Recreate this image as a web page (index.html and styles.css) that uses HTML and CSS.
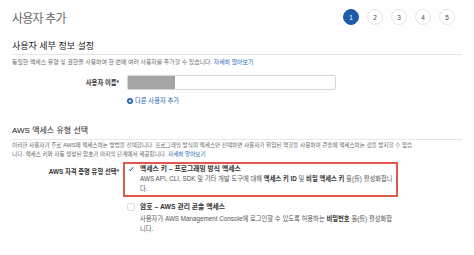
FILE: index.html
```html
<!DOCTYPE html>
<html lang="ko">
<head>
  <meta charset="UTF-8" />
  <meta name="viewport" content="width=device-width, initial-scale=1.0"/>
  <title>사용자 추가</title>
  <link rel="stylesheet" href="styles.css">
</head>
<body>
  <div class="page">
    <div class="top">
      <h1 class="title">사용자 추가</h1>
      <ol class="steps">
        <li class="active">1</li>
        <li>2</li>
        <li>3</li>
        <li>4</li>
        <li>5</li>
      </ol>
    </div>

    <section class="section first">
      <h2>사용자 세부 정보 설정</h2>
      <p class="desc">동일한 액세스 유형 및 권한을 사용하여 한 번에 여러 사용자를 추가할 수 있습니다. <a href="#">자세히 알아보기</a></p>

      <div class="field">
        <label class="label">사용자 이름*</label>
        <div class="input"><span class="masked"></span></div>
      </div>
      <div class="field add-row">
        <span></span>
        <a href="#" class="add-user">
          <svg width="6" height="6" viewBox="0 0 12 12">
            <circle cx="6" cy="6" r="6" fill="#1d5fae"/>
            <path d="M6 3v6M3 6h6" stroke="#fff" stroke-width="2"/>
          </svg>
          다른 사용자 추가
        </a>
      </div>
    </section>

    <section class="section second">
      <h2>AWS 액세스 유형 선택</h2>
      <p class="desc">
        <span class="line">이러한 사용자가 주로 AWS에 액세스하는 방법을 선택합니다. 프로그래밍 방식의 액세스만 선택하면 사용자가 위임된 역할을 사용하여 콘솔에 액세스하는 것을 방지할 수 없습</span>
        <span class="line">니다. 액세스 키와 자동 생성된 암호가 마지막 단계에서 제공됩니다. <a href="#">자세히 알아보기</a></span>
      </p>

      <div class="field cred">
        <label class="label">AWS 자격 증명 유형 선택*</label>
        <div class="options">
          <div class="option selected">
            <span class="check on">
              <svg width="6" height="6" viewBox="0 0 12 12">
                <path d="M2 6.5l2.8 2.8L10 2.5" fill="none" stroke="#1b3f7a" stroke-width="2"/>
              </svg>
            </span>
            <div class="option-text">
              <div class="option-title">액세스 키 – 프로그래밍 방식 액세스</div>
              <div class="option-desc">
                <span class="line">AWS API, CLI, SDK 및 기타 개발 도구에 대해 <b>액세스 키 ID</b> 및 <b>비밀 액세스 키</b> 을(를) 활성화합니</span>
                <span class="line">다.</span>
              </div>
            </div>
          </div>
          <div class="option">
            <span class="check"></span>
            <div class="option-text">
              <div class="option-title">암호 – AWS 관리 콘솔 액세스</div>
              <div class="option-desc">
                <span class="line">사용자가 AWS Management Console에 로그인할 수 있도록 허용하는 <b>비밀번호</b> 을(를) 활성화합</span>
                <span class="line">니다.</span>
              </div>
            </div>
          </div>
        </div>
      </div>
    </section>
  </div>
</body>
</html>
```

FILE: styles.css
```css
body {
  font-family: "Liberation Sans", "Noto Sans CJK KR", sans-serif;
  background-color: #fff;
  color: #333;
  margin: 0;
  padding: 0;
}

.page {
  padding: 0 12px;
}

.top {
  height: 34px;
  display: flex;
  align-items: center;
  justify-content: space-between;
}

.title {
  margin: 0;
  font-size: 12px;
  letter-spacing: -0.8px;
  font-weight: 400;
  color: #666;
}

.steps {
  list-style: none;
  margin: 0 7px 0 0;
  padding: 0;
  display: flex;
  gap: 8px;
}

.steps li {
  width: 16px;
  height: 16px;
  border-radius: 50%;
  border: 1px solid #e6e6e6;
  box-sizing: border-box;
  display: flex;
  align-items: center;
  justify-content: center;
  font-size: 6.5px;
  color: #444;
  background-color: #fff;
}

.steps li.active {
  background-color: #1f5bab;
  border-color: #1f5bab;
  color: #fff;
}

.section h2 {
  margin: 0;
  font-size: 9px;
  line-height: 14px;
  font-weight: 400;
  color: #222;
  padding-bottom: 1px;
  border-bottom: 1px solid #e6e6e6;
}

.first h2 {
  margin-top: 5px;
}

.second h2 {
  margin-top: 18px;
  font-size: 8px;
}

.desc {
  margin: 3px 0 0;
  font-size: 5.9px;
  line-height: 9.5px;
  color: #666;
}

.second .desc {
  margin-top: 1px;
  font-size: 5.6px;
}

.line {
  display: block;
  white-space: nowrap;
}

a {
  color: #1e68b5;
  text-decoration: none;
}

.field {
  display: grid;
  grid-template-columns: 107px 1fr;
  column-gap: 8px;
  align-items: center;
  margin-top: 7px;
}

.label {
  text-align: right;
  font-size: 6.3px;
  font-weight: 700;
  color: #333;
}

.input {
  width: 209px;
  height: 15px;
  border: 1px solid #d5d5d5;
  border-radius: 2px;
  box-sizing: border-box;
  display: flex;
}

.masked {
  width: 47px;
  background-color: #a5a5a5;
}

.add-row {
  margin-top: 6px;
}

.add-user {
  display: flex;
  align-items: center;
  gap: 2px;
  font-size: 6.3px;
  line-height: 10px;
  color: #1e68b5;
}

.cred {
  margin-top: 2px;
  align-items: start;
}

.cred .label {
  margin-top: 5px;
}

.options {
  display: flex;
  flex-direction: column;
  gap: 3px;
}

.option {
  margin-left: -4px;
  width: 275px;
  box-sizing: border-box;
  border: 2px solid transparent;
  padding: 0 4px 1px 2px;
  display: flex;
  gap: 5px;
  align-items: flex-start;
}

.option.selected {
  border-color: #e2574c;
}

.check {
  width: 8px;
  height: 8px;
  margin-top: 1px;
  flex: none;
  border: 1px solid #ddd;
  border-radius: 2px;
  box-sizing: border-box;
  display: flex;
  align-items: center;
  justify-content: center;
}

.check.on {
  border-color: #fff;
}

.option-text {
  flex: 1;
}

.option-title {
  font-size: 6.8px;
  line-height: 10px;
  font-weight: 700;
  color: #333;
}

.option-desc {
  font-size: 6.3px;
  line-height: 10px;
  color: #555;
}

.option + .option .option-desc {
  margin-top: 2px;
}

.option-desc b {
  color: #333;
}
```
